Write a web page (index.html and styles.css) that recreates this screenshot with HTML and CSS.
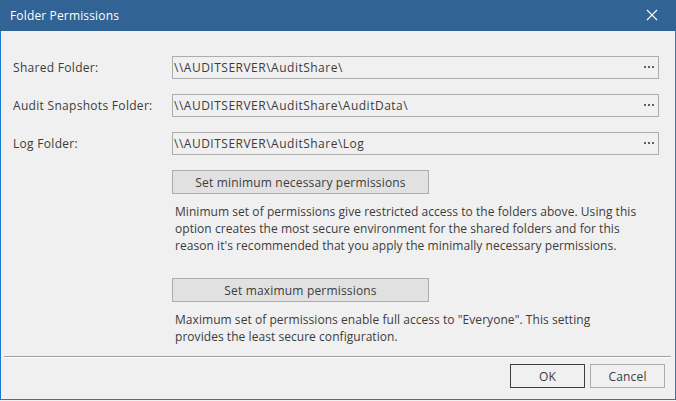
FILE: index.html
```html
<!DOCTYPE html>
<html>
<head>
<meta charset="utf-8">
<link rel="stylesheet" href="styles.css">
</head>
<body>
<div class="window">
  <div class="titlebar">
    <span class="title">Folder Permissions</span>
    <svg class="close" width="12" height="12" viewBox="0 0 12 12"><path d="M1 1 L11 11 M11 1 L1 11" stroke="#ffffff" stroke-width="1.1" fill="none"/></svg>
  </div>
  <div class="content">
    <div class="row">
      <div class="label">Shared Folder:</div>
      <div class="field"><span class="path">\\AUDITSERVER\AuditShare\</span><span class="dots"><i></i><i></i><i></i></span></div>
    </div>
    <div class="row">
      <div class="label">Audit Snapshots Folder:</div>
      <div class="field"><span class="path">\\AUDITSERVER\AuditShare\AuditData\</span><span class="dots"><i></i><i></i><i></i></span></div>
    </div>
    <div class="row">
      <div class="label">Log Folder:</div>
      <div class="field"><span class="path">\\AUDITSERVER\AuditShare\Log</span><span class="dots"><i></i><i></i><i></i></span></div>
    </div>
    <div class="option">
      <div class="btn wide">Set minimum necessary permissions</div>
      <p class="desc">Minimum set of permissions give restricted access to the folders above. Using this<br>option creates the most secure environment for the shared folders and for this<br>reason it's recommended that you apply the minimally necessary permissions.</p>
    </div>
    <div class="option second">
      <div class="btn wide">Set maximum permissions</div>
      <p class="desc">Maximum set of permissions enable full access to "Everyone". This setting<br>provides the least secure configuration.</p>
    </div>
  </div>
  <div class="separator"></div>
  <div class="footer">
    <div class="btn small default">OK</div>
    <div class="btn small">Cancel</div>
  </div>
</div>
</body>
</html>
```

FILE: styles.css
```css
html, body {
  margin: 0;
  padding: 0;
  background: #f0f0f0;
}
body {
  width: 676px;
  height: 401px;
  overflow: hidden;
  font-family: "Open Sans", "Noto Sans", sans-serif;
  font-size: 12px;
  color: #3c3c3c;
}
.window {
  width: 676px;
  height: 400px;
  box-sizing: border-box;
  border: 1px solid #1a7ad0;
  border-top: none;
  background: #f0f0f0;
  display: flex;
  flex-direction: column;
}
.titlebar {
  height: 31px;
  margin: 0 -1px;
  background: #316395;
  color: #ffffff;
  display: flex;
  align-items: center;
  padding: 0 0 0 10px;
  flex-shrink: 0;
}
.title {
  flex: 1;
  padding-bottom: 1px;
  letter-spacing: 0.15px;
}
.close {
  margin-right: 18px;
  margin-top: -1px;
}
.content {
  padding: 25px 16px 0 12px;
  flex: 1;
}
.row {
  display: flex;
  align-items: center;
  height: 23px;
  margin-bottom: 15px;
}
.label {
  flex: 0 0 159px;
  letter-spacing: 0.3px;
}
.field {
  flex: 0 0 487px;
  height: 23px;
  box-sizing: border-box;
  border: 1px solid #adadad;
  display: flex;
  align-items: center;
  padding: 0 3px 0 1px;
}
.path {
  flex: 1;
  white-space: nowrap;
  letter-spacing: 0.5px;
}
.dots {
  display: flex;
  gap: 2px;
  margin-right: 1px;
  margin-top: -1px;
}
.dots i {
  display: block;
  width: 2px;
  height: 2px;
  background: #606060;
}
.option {
  margin-left: 159px;
}
.second {
  margin-top: 24px;
}
.btn {
  box-sizing: border-box;
  height: 24px;
  border: 1px solid #adadad;
  background: #e1e1e1;
  display: flex;
  align-items: center;
  justify-content: center;
  letter-spacing: 0.18px;
}
.wide {
  width: 257px;
}
.desc {
  margin: 9px 0 0 3px;
  line-height: 17px;
  letter-spacing: 0.05px;
}
.separator {
  height: 1px;
  background: #a0a0a0;
  border-bottom: 1px solid #ffffff;
  margin: 0 4px 0 3px;
}
.footer {
  display: flex;
  justify-content: flex-end;
  gap: 5px;
  padding: 6px 10px 11px 0;
}
.small {
  width: 75px;
  background: #f0f0f0;
}
.default {
  border-color: #3c3c3c;
}
```
